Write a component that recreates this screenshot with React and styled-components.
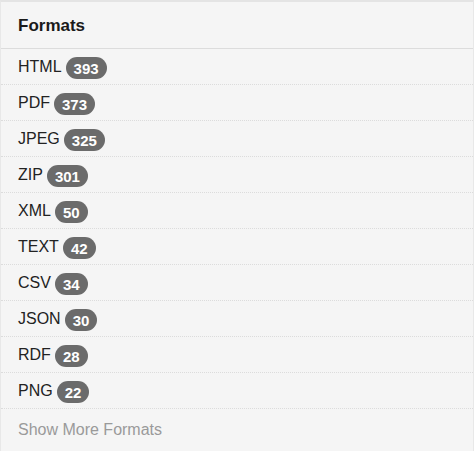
import React from 'react';
import styled, { createGlobalStyle } from 'styled-components';

const FORMATS = [
  { name: 'HTML', count: 393 },
  { name: 'PDF', count: 373 },
  { name: 'JPEG', count: 325 },
  { name: 'ZIP', count: 301 },
  { name: 'XML', count: 50 },
  { name: 'TEXT', count: 42 },
  { name: 'CSV', count: 34 },
  { name: 'JSON', count: 30 },
  { name: 'RDF', count: 28 },
  { name: 'PNG', count: 22 },
];

const GlobalStyle = createGlobalStyle`
  html, body {
    margin: 0;
    padding: 0;
    background: #f5f5f5;
  }
  body {
    font-family: 'Liberation Sans', Arial, sans-serif;
  }
`;

const Panel = styled.section`
  width: 474px;
  height: 451px;
  box-sizing: border-box;
  background: #f5f5f5;
  border-top: 2px solid #e4e4e4;
  border-left: 1px solid #e8e8e8;
  border-right: 1px solid #e8e8e8;
  display: flex;
  flex-direction: column;
  overflow: hidden;
`;

const Header = styled.h2`
  margin: 0;
  height: 47px;
  box-sizing: border-box;
  padding: 2px 17px 0;
  display: flex;
  align-items: center;
  font-size: 17px;
  font-weight: bold;
  color: #1a1a1a;
  border-bottom: 1px solid #dcdcdc;
`;

const List = styled.ul`
  list-style: none;
  margin: 0;
  padding: 0;
`;

const Row = styled.li`
  height: 36px;
  box-sizing: border-box;
  padding: 1px 17px 0;
  display: flex;
  align-items: center;
  gap: 4px;
  border-bottom: 1px dotted #dcdcdc;
  font-size: 16px;
  color: #222;
`;

const Badge = styled.span`
  display: inline-flex;
  align-items: center;
  justify-content: center;
  height: 22px;
  padding: 0 8px;
  margin-top: 2px;
  border-radius: 11px;
  background: #6b6b6b;
  color: #fff;
  font-size: 15px;
  font-weight: bold;
`;

const More = styled.a`
  display: flex;
  align-items: center;
  height: 42px;
  padding: 0 17px;
  font-size: 16px;
  color: #9a9a9a;
  text-decoration: none;
`;

export default function App() {
  return (
    <>
      <GlobalStyle />
      <Panel>
        <Header>Formats</Header>
        <List>
          {FORMATS.map(f => (
            <Row key={f.name}>
              {f.name}
              <Badge>{f.count}</Badge>
            </Row>
          ))}
        </List>
        <More href="#">Show More Formats</More>
      </Panel>
    </>
  );
}
